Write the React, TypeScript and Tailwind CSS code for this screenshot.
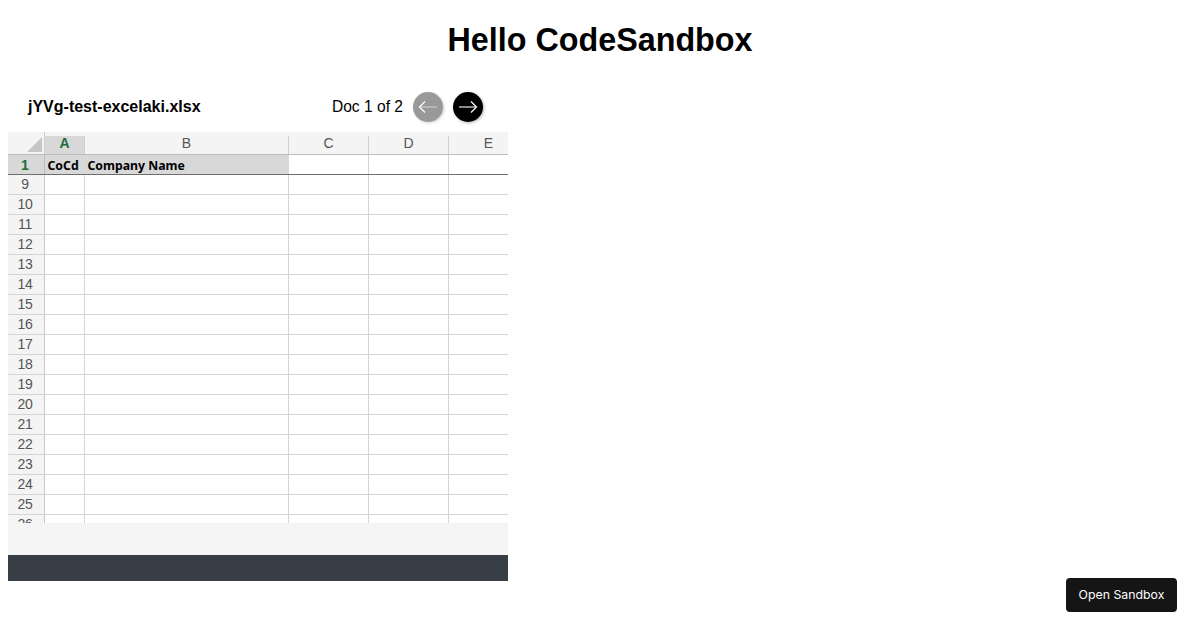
// Sheet preview - column widths include the 1px right border
const columns = [
  { label: 'A', width: 'w-[40px]', active: true },
  { label: 'B', width: 'w-[204px]', active: false },
  { label: 'C', width: 'w-[80px]', active: false },
  { label: 'D', width: 'w-[80px]', active: false },
  { label: 'E', width: 'w-[80px]', active: false },
];

const rowNumbers = [9, 10, 11, 12, 13, 14, 15, 16, 17, 18, 19, 20, 21, 22, 23, 24, 25, 26];

function Arrow({ flip }: { flip?: boolean }) {
  return (
    <svg width="20" height="14" viewBox="0 0 20 14" fill="none" className={flip ? 'rotate-180' : ''}>
      <path d="M1 7H18" stroke="#c4c4c4" strokeWidth="1.4" />
      <path d="M13 1.5L18.5 7L13 12.5" stroke="#fff" strokeWidth="1.2" />
    </svg>
  );
}

function SheetHeader() {
  return (
    <div className="flex h-[23px] bg-[#f4f4f4] border-b border-[#bdbdbd]">
      <div className="relative w-[37px] shrink-0 border-r border-[#cfcfcf]">
        <div className="absolute right-[2px] bottom-[2px] w-0 h-0 border-l-[15px] border-l-transparent border-b-[15px] border-b-[#c6c6c6]" />
      </div>
      {columns.map((col) => (
        <div key={col.label} className={`${col.width} shrink-0 flex flex-col justify-end`}>
          <div
            className={`h-[18px] pb-[5px] flex items-center justify-center text-sm leading-none border-r border-[#cfcfcf] ${
              col.active ? 'bg-[#d8d8d8] text-[#1f6b3c] font-bold' : 'text-[#555]'
            }`}
          >
            {col.label}
          </div>
        </div>
      ))}
    </div>
  );
}

function FrozenRow() {
  const nameCell = "shrink-0 bg-[#d8d8d8] pl-[2.5px] pt-[3px] flex items-center font-['Noto_Sans',sans-serif] text-[12.25px] font-bold text-black";
  return (
    <div className="flex h-[20px] border-b border-[#6e6e6e]">
      <div className="w-[37px] shrink-0 bg-[#d8d8d8] border-r border-[#bdbdbd] pr-[2px] flex items-center justify-center text-sm font-bold text-[#1f6b3c]">
        1
      </div>
      <div className={`w-[40px] ${nameCell}`}>CoCd</div>
      <div className={`w-[204px] ${nameCell}`}>Company Name</div>
      <div className="w-[80px] shrink-0 border-r border-[#d4d4d4]" />
      <div className="w-[80px] shrink-0 border-r border-[#d4d4d4]" />
      <div className="w-[80px] shrink-0" />
    </div>
  );
}

function SheetRow({ n }: { n: number }) {
  return (
    <div className="flex h-[20px] shrink-0 border-b border-[#d4d4d4]">
      <div className="w-[37px] shrink-0 bg-[#f4f4f4] border-r border-[#c8c8c8] pr-[2px] pb-[2px] flex items-center justify-center text-sm tracking-[-0.3px] text-[#555]">
        {n}
      </div>
      {columns.map((col) => (
        <div key={col.label} className={`${col.width} shrink-0 border-r border-[#d4d4d4]`} />
      ))}
    </div>
  );
}

export default function App() {
  return (
    <div className="relative h-[630px] w-[1200px] overflow-hidden bg-white font-['Liberation_Sans',Arial,sans-serif] text-black">
      <h1 className="pt-[22px] text-center text-[32.3px] leading-[37px] font-bold">Hello CodeSandbox</h1>

      <div className="ml-2 mt-[25px] w-[500px]">
        {/* Doc toolbar */}
        <div className="flex h-[46px] items-center pl-5 pr-[25px]">
          <span className="text-base font-bold">jYVg-test-excelaki.xlsx</span>
          <span className="ml-auto text-[15.6px]">Doc 1 of 2</span>
          <button className="ml-[10px] flex h-[30px] w-[30px] items-center justify-center rounded-full bg-[#999] shadow-[1px_1px_3px_rgba(0,0,0,0.2)]">
            <Arrow flip />
          </button>
          <button className="ml-[10px] flex h-[30px] w-[30px] items-center justify-center rounded-full bg-black shadow-[1px_1px_3px_rgba(0,0,0,0.3)]">
            <Arrow />
          </button>
        </div>

        {/* Sheet */}
        <div className="mt-[2px] h-[449px] overflow-hidden">
          <div className="h-[391px] overflow-hidden">
            <SheetHeader />
            <FrozenRow />
            {rowNumbers.map((n) => (
              <SheetRow key={n} n={n} />
            ))}
          </div>
          <div className="h-[32px] bg-[#f5f5f5]" />
          <div className="h-[26px] bg-[#373e45]" />
        </div>
      </div>

      <button className="absolute right-[23px] bottom-[18px] flex h-[34px] w-[111px] items-center justify-center rounded-[4px] bg-[#151515] font-['Inter',sans-serif] text-[12.3px] text-white">
        Open Sandbox
      </button>
    </div>
  );
}
